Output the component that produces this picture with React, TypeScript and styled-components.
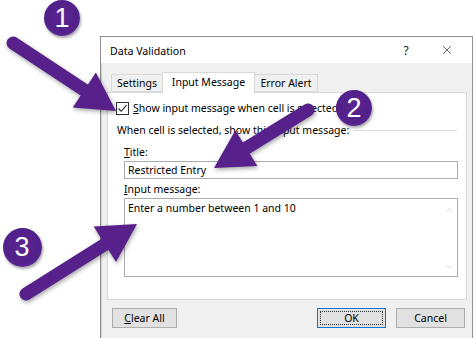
import React from "react";
import styled, { createGlobalStyle } from "styled-components";
import { X, ChevronUp, ChevronDown } from "lucide-react";

const GlobalStyle = createGlobalStyle`
  html, body { margin: 0; padding: 0; background: #ffffff; }
  body { font-family: "Noto Sans", "Open Sans", sans-serif; }
`;

const Page = styled.div({
  position: "relative",
  width: "474px",
  height: "338px",
  overflow: "hidden",
  background: "#ffffff",
  padding: "36px 0 0 100px",
  boxSizing: "border-box",
});

const Dialog = styled.div({
  width: "373px",
  height: "320px",
  boxSizing: "border-box",
  border: "1px solid #8f8f8f",
  boxShadow: "inset 1px 0 0 #d4d4d4",
  background: "#f0f0f0",
  fontSize: "10.5px",
  color: "#000",
  display: "flex",
  flexDirection: "column",
});

const TitleBar = styled.div({
  height: "26px",
  background: "#ffffff",
  display: "flex",
  alignItems: "center",
  padding: "0 0 0 9px",
  fontSize: "10.6px",
});

const TitleText = styled.div({ flex: 1, paddingTop: "1px" });

const TitleButton = styled.div<{ $w: number }>(({ $w }) => ({
  width: `${$w}px`,
  height: "26px",
  display: "flex",
  alignItems: "center",
  justifyContent: "center",
  fontSize: "12px",
  color: "#222",
}));

const Body = styled.div({
  padding: "9px 5px 0 6px",
  display: "flex",
  flexDirection: "column",
});

const TabRow = styled.div({
  display: "flex",
  alignItems: "flex-end",
  height: "20px",
  paddingLeft: "4px",
  position: "relative",
  zIndex: 1,
});

const Tab = styled.div<{ $active?: boolean; $w: number }>(({ $active, $w }) => ({
  width: `${$w}px`,
  height: $active ? "21px" : "18px",
  boxSizing: "border-box",
  border: "1px solid #d9d9d9",
  borderBottom: $active ? "none" : "1px solid #d9d9d9",
  background: $active ? "#ffffff" : "#f0f0f0",
  marginLeft: $active ? "-1px" : "0",
  marginRight: $active ? "-1px" : "0",
  marginBottom: $active ? "-1px" : "0",
  display: "flex",
  alignItems: "center",
  justifyContent: "center",
  paddingBottom: $active ? "2px" : "0",
}));

const Panel = styled.div({
  height: "208px",
  boxSizing: "border-box",
  background: "#ffffff",
  border: "1px solid #d9d9d9",
  padding: "7px 8px 0 8px",
  display: "flex",
  flexDirection: "column",
});

const CheckRow = styled.div({
  display: "flex",
  alignItems: "center",
  height: "16px",
  gap: "4px",
});

const CheckBox = styled.div({
  width: "13px",
  height: "13px",
  boxSizing: "border-box",
  border: "1px solid #333",
  background: "#fff",
  display: "flex",
  alignItems: "center",
  justifyContent: "center",
});

const GroupHead = styled.div({
  display: "flex",
  alignItems: "center",
  height: "16px",
  marginTop: "6px",
  paddingLeft: "1px",
  "&::after": {
    content: '""',
    flex: 1,
    borderTop: "1px solid #dcdcdc",
    marginLeft: "4px",
    marginRight: "1px",
  },
});

const Group = styled.div({
  paddingLeft: "8px",
  paddingRight: "1px",
  display: "flex",
  flexDirection: "column",
});

const FieldLabel = styled.div<{ $gap: number }>(({ $gap }) => ({
  height: "16px",
  lineHeight: "16px",
  marginTop: `${$gap}px`,
}));

const TextBox = styled.div({
  marginTop: "1px",
  width: "334px",
  height: "18px",
  boxSizing: "border-box",
  border: "1px solid #acacac",
  display: "flex",
  alignItems: "center",
  paddingLeft: "3px",
});

const MessageBox = styled.div({
  marginTop: "1px",
  width: "334px",
  height: "79px",
  boxSizing: "border-box",
  border: "1px solid #acacac",
  display: "flex",
});

const MessageText = styled.div({ flex: 1, padding: "2px 3px" });

const ScrollBar = styled.div({
  width: "17px",
  display: "flex",
  flexDirection: "column",
  justifyContent: "space-between",
  alignItems: "center",
  padding: "6px 0 4px",
  color: "#c2c2c2",
});

const ButtonRow = styled.div({
  display: "flex",
  marginTop: "8px",
  padding: "0 2px 0 5px",
  gap: "10px",
});

const Button = styled.div<{ $w: number; $default?: boolean }>(({ $w, $default }) => ({
  width: `${$w}px`,
  height: "20px",
  boxSizing: "border-box",
  background: "#e1e1e1",
  border: $default ? "1px solid #0078d7" : "1px solid #adadad",
  display: "flex",
  alignItems: "center",
  justifyContent: "center",
  position: "relative",
  "&::before": $default
    ? {
        content: '""',
        position: "absolute",
        inset: "2px",
        border: "1px dotted #333",
      }
    : {},
}));

const Spacer = styled.div({ flex: 1 });

const Overlay = styled.svg({
  position: "absolute",
  left: 0,
  top: 0,
  pointerEvents: "none",
  filter: "drop-shadow(1px 2px 2px rgba(0,0,0,0.35))",
});

const Badge = styled.div<{ $x: number; $y: number; $r: number }>(({ $x, $y, $r }) => ({
  position: "absolute",
  left: `${$x - $r}px`,
  top: `${$y - $r}px`,
  width: `${$r * 2}px`,
  height: `${$r * 2}px`,
  borderRadius: "50%",
  background: "radial-gradient(circle at 50% 45%, #5a2591 0%, #52208a 60%, #6c3ba3 100%)",
  boxShadow: "1px 2px 3px rgba(0,0,0,0.35)",
  color: "#ffffff",
  fontFamily: '"Liberation Sans", Arial, sans-serif',
  fontSize: "27px",
  display: "flex",
  alignItems: "center",
  justifyContent: "center",
}));

const ARROW_COLOR = "#57208b";

const arrows = [
  { x1: 13, y1: 43, x2: 116, y2: 111 },
  { x1: 308, y1: 110, x2: 214, y2: 168 },
  { x1: 26, y1: 294, x2: 137, y2: 224 },
];

const badges = [
  { n: "1", x: 62, y: 18, r: 18 },
  { n: "2", x: 354, y: 108, r: 18 },
  { n: "3", x: 22, y: 247, r: 19.5 },
];

const Arrow = ({ x1, y1, x2, y2 }: { x1: number; y1: number; x2: number; y2: number }) => {
  const dx = x2 - x1;
  const dy = y2 - y1;
  const len = Math.hypot(dx, dy);
  const ux = dx / len;
  const uy = dy / len;
  const headLen = 38;
  const half = 21;
  const bx = x2 - ux * headLen;
  const by = y2 - uy * headLen;
  const px = -uy;
  const py = ux;
  const pts = [
    `${x2},${y2}`,
    `${bx + px * half},${by + py * half}`,
    `${bx - px * half},${by - py * half}`,
  ].join(" ");
  return (
    <g>
      <line
        x1={x1}
        y1={y1}
        x2={bx + ux * 4}
        y2={by + uy * 4}
        stroke={ARROW_COLOR}
        strokeWidth={13}
        strokeLinecap="round"
      />
      <polygon points={pts} fill={ARROW_COLOR} />
    </g>
  );
};

export default function App() {
  return (
    <Page>
      <GlobalStyle />
      <Dialog>
        <TitleBar>
          <TitleText>Data Validation</TitleText>
          <TitleButton $w={32}>?</TitleButton>
          <TitleButton $w={50}>
            <X size={14} strokeWidth={1.2} />
          </TitleButton>
        </TitleBar>
        <Body>
          <TabRow>
            <Tab $w={52}>Settings</Tab>
            <Tab $w={93} $active>
              Input Message
            </Tab>
            <Tab $w={64}>Error Alert</Tab>
          </TabRow>
          <Panel>
            <CheckRow>
              <CheckBox>
                <svg width="11" height="11" viewBox="0 0 11 11">
                  <polyline points="1.5,5.5 4.2,8.3 9.6,2.2" fill="none" stroke="#222" strokeWidth="1.1" />
                </svg>
              </CheckBox>
              <span>
                <u>S</u>how input message when cell is selected
              </span>
            </CheckRow>
            <GroupHead>When cell is selected, show this input message:</GroupHead>
            <Group>
              <FieldLabel $gap={6}>
                <u>T</u>itle:
              </FieldLabel>
              <TextBox>Restricted Entry</TextBox>
              <FieldLabel $gap={2}>
                <u>I</u>nput message:
              </FieldLabel>
              <MessageBox>
                <MessageText>Enter a number between 1 and 10</MessageText>
                <ScrollBar>
                  <ChevronUp size={10} strokeWidth={1.5} />
                  <ChevronDown size={10} strokeWidth={1.5} />
                </ScrollBar>
              </MessageBox>
            </Group>
          </Panel>
          <ButtonRow>
            <Button $w={65}>
              <span>
                <u>C</u>lear All
              </span>
            </Button>
            <Spacer />
            <Button $w={69} $default>
              OK
            </Button>
            <Button $w={69}>Cancel</Button>
          </ButtonRow>
        </Body>
      </Dialog>
      <Overlay width={474} height={338} viewBox="0 0 474 338">
        {arrows.map((a, i) => (
          <Arrow key={i} {...a} />
        ))}
      </Overlay>
      {badges.map((b) => (
        <Badge key={b.n} $x={b.x} $y={b.y} $r={b.r}>
          {b.n}
        </Badge>
      ))}
    </Page>
  );
}
